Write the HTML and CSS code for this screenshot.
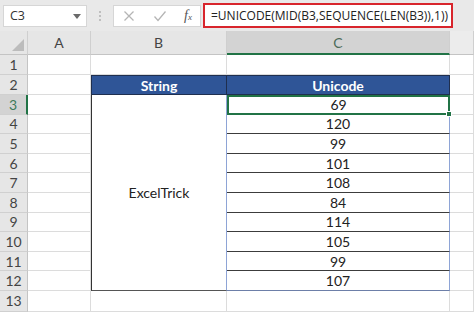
FILE: index.html
```html
<!DOCTYPE html>
<html>
<head>
<meta charset="utf-8">
<link rel="stylesheet" href="styles.css">
</head>
<body>
<div class="toolbar">
  <div class="namebox">
    <span>C3</span>
    <svg class="caret" width="8" height="5" viewBox="0 0 8 5"><path d="M0 0h8L4 5z" fill="#6a6a6a"/></svg>
  </div>
  <div class="dots">
    <svg width="4" height="12" viewBox="0 0 4 12"><circle cx="2" cy="2" r="1" fill="#b0b0b0"/><circle cx="2" cy="6" r="1" fill="#b0b0b0"/><circle cx="2" cy="10" r="1" fill="#b0b0b0"/></svg>
  </div>
  <div class="fxbox">
    <svg width="12" height="12" viewBox="0 0 12 12"><path d="M1.5 1.5l9 9M10.5 1.5l-9 9" stroke="#b5b5b5" stroke-width="1.3"/></svg>
    <svg width="14" height="12" viewBox="0 0 14 12"><path d="M1.5 6.5l3.5 4 7.5-9" stroke="#b5b5b5" stroke-width="1.3" fill="none"/></svg>
    <span class="fx">f<small>x</small></span>
  </div>
  <div class="formula">=UNICODE(MID(B3,SEQUENCE(LEN(B3)),1))</div>
</div>

<div class="sheet">
  <div class="corner"><span class="tri"></span></div>
  <div class="ch">A</div>
  <div class="ch">B</div>
  <div class="ch sel">C</div>
  <div class="ch d"></div>

  <div class="rh">1</div><div class="c"></div><div class="c"></div><div class="c"></div><div class="c"></div>

  <div class="rh">2</div><div class="c"></div><div class="c th thb">String</div><div class="c th thc">Unicode</div><div class="c"></div>

  <div class="rh rsel">3</div><div class="c"></div><div class="c merged">ExcelTrick</div><div class="c tv active">69<span class="handle"></span></div><div class="c"></div>

  <div class="rh">4</div><div class="c"></div><div class="c tv">120</div><div class="c"></div>
  <div class="rh">5</div><div class="c"></div><div class="c tv">99</div><div class="c"></div>
  <div class="rh">6</div><div class="c"></div><div class="c tv">101</div><div class="c"></div>
  <div class="rh">7</div><div class="c"></div><div class="c tv">108</div><div class="c"></div>
  <div class="rh">8</div><div class="c"></div><div class="c tv">84</div><div class="c"></div>
  <div class="rh">9</div><div class="c"></div><div class="c tv">114</div><div class="c"></div>
  <div class="rh">10</div><div class="c"></div><div class="c tv">105</div><div class="c"></div>
  <div class="rh">11</div><div class="c"></div><div class="c tv">99</div><div class="c"></div>
  <div class="rh">12</div><div class="c"></div><div class="c tv last">107</div><div class="c"></div>
  <div class="rh">13</div><div class="c"></div><div class="c"></div><div class="c"></div><div class="c"></div>
</div>
</body>
</html>
```

FILE: styles.css
```css
* { box-sizing: border-box; }
html, body { margin: 0; padding: 0; background: #fff; }
body {
  width: 474px;
  height: 312px;
  overflow: hidden;
  font-family: Lato, "Open Sans", sans-serif;
  color: #222;
}

.toolbar {
  height: 31px;
  background: #e9e9e9;
  display: flex;
  align-items: center;
  padding-left: 3px;
}
.namebox {
  width: 84px;
  height: 22px;
  background: #fff;
  border: 1px solid #d6d6d6;
  display: flex;
  align-items: center;
  justify-content: space-between;
  padding: 0 5px 0 6px;
  font-family: "Open Sans", sans-serif;
  font-size: 12.5px;
  color: #333;
}
.caret { margin-top: 1px; }
.dots {
  width: 26px;
  display: flex;
  justify-content: center;
}
.fxbox {
  width: 88px;
  height: 22px;
  background: #fff;
  border: 1px solid #d6d6d6;
  display: flex;
  align-items: center;
  justify-content: space-between;
  padding: 0 8px 0 9px;
}
.fx {
  font-family: "Liberation Serif", serif;
  font-style: italic;
  font-size: 14px;
  color: #555;
}
.fx small { font-size: 9px; }
.formula {
  margin-left: 2px;
  width: 250px;
  height: 25px;
  background: #fff;
  border: 2px solid #d8252c;
  display: flex;
  align-items: center;
  padding-left: 6px;
  font-family: "Open Sans", sans-serif;
  font-size: 12px;
  color: #222;
  white-space: nowrap;
}

.sheet {
  display: grid;
  grid-template-columns: 28px 63px 136px 223px 24px;
  grid-template-rows: 24px 20px 20px repeat(10, 19.6px) 21px;
  font-size: 14px;
}
.corner {
  background: #e6e6e6;
  border-right: 1px solid #cfcfcf;
  border-bottom: 1px solid #c4c4c4;
  position: relative;
}
.tri {
  position: absolute;
  right: 3px;
  bottom: 3px;
  width: 0;
  height: 0;
  border-left: 12px solid transparent;
  border-bottom: 12px solid #bcbcbc;
}
.ch {
  background: #e6e6e6;
  border-right: 1px solid #cfcfcf;
  border-bottom: 1px solid #c4c4c4;
  display: flex;
  align-items: center;
  justify-content: center;
  color: #444;
  font-size: 14px;
}
.ch.sel {
  background: #d3d3d3;
  border-bottom: 2px solid #217346;
  color: #4b6b5a;
}
.ch.d { background: #ececec; }
.rh {
  background: #e6e6e6;
  border-right: 1px solid #c4c4c4;
  border-bottom: 1px solid #d0d0d0;
  display: flex;
  align-items: center;
  justify-content: center;
  color: #444;
  font-size: 14px;
}
.rh.rsel {
  background: #d3d3d3;
  border-right: 2px solid #217346;
  color: #3f7b5b;
}
.c {
  border-right: 1px solid #dcdcdc;
  border-bottom: 1px solid #dcdcdc;
  display: flex;
  align-items: center;
  justify-content: center;
}
.th {
  background: #2f5597;
  color: #fff;
  font-weight: 700;
  font-size: 14px;
  border-top: 1px solid #1f2f4f;
  border-bottom: 1px solid #1f2f4f;
}
.thb { border-left: 1px solid #1f2f4f; border-right: 1px solid #1f2f4f; }
.thc { border-right: 1px solid #1f2f4f; }
.merged {
  grid-row: span 10;
  border-left: 1px solid #333;
  border-bottom: 1px solid #555;
  border-right: 1px solid #8ea4d6;
  color: #222;
  font-size: 14px;
}
.tv {
  border-right: 1px solid #8ea4d6;
  border-bottom: 1px solid #3c3c3c;
  color: #222;
  font-size: 14px;
}
.tv.last { border-bottom: 1px solid #6d7fa8; }
.active {
  position: relative;
  border: 2px solid #217346;
  border-left-width: 2px;
}
.handle {
  position: absolute;
  right: -4px;
  bottom: -4px;
  width: 6px;
  height: 6px;
  background: #217346;
  border: 1px solid #fff;
}
```
